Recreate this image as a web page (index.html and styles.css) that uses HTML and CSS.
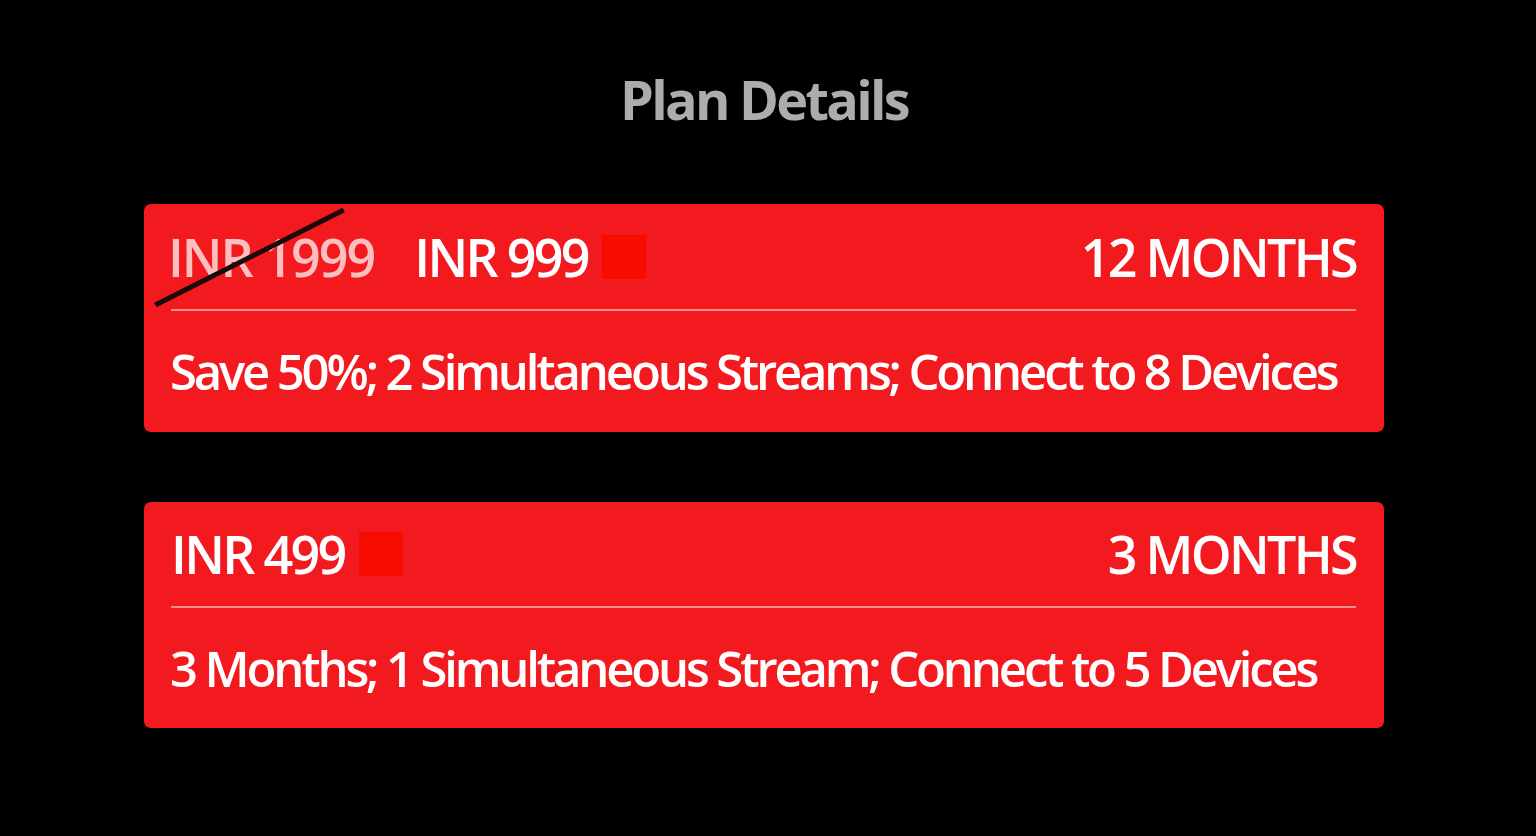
FILE: index.html
```html
<!DOCTYPE html>
<html>
<head>
<meta charset="utf-8">
<link rel="stylesheet" href="styles.css">
</head>
<body>
<main class="wrap">
  <h1 class="title">Plan Details</h1>
  <section class="card card-sale">
    <div class="head">
      <div class="prices">
        <span class="old">INR 1999</span>
        <span class="price">INR 999</span>
        <span class="chip"></span>
      </div>
      <span class="term">12 MONTHS</span>
    </div>
    <p class="desc">Save 50%; 2 Simultaneous Streams; Connect to 8 Devices</p>
  </section>
  <section class="card">
    <div class="head">
      <div class="prices">
        <span class="price">INR 499</span>
        <span class="chip"></span>
      </div>
      <span class="term">3 MONTHS</span>
    </div>
    <p class="desc">3 Months; 1 Simultaneous Stream; Connect to 5 Devices</p>
  </section>
</main>
</body>
</html>
```

FILE: styles.css
```css
html, body {
  margin: 0;
  background: #000;
  height: 100%;
}
body {
  font-family: "Open Sans", "Liberation Sans", sans-serif;
}
.wrap {
  width: 1240px;
  margin-left: 144px;
  padding-top: 65px;
}
.title {
  margin: 0 0 71px;
  text-align: center;
  color: #acacac;
  font-size: 54px;
  font-weight: 700;
  line-height: 68px;
  letter-spacing: -2.7px;
}
.card {
  background: #f31a1f;
  border-radius: 7px;
  padding: 18px 28px 26px 26px;
  margin-bottom: 70px;
  color: #fff;
}
.card-sale {
  padding-bottom: 27px;
}
.card-sale .head {
  height: 69px;
}
.head {
  display: flex;
  justify-content: space-between;
  align-items: center;
  height: 68px;
  padding-bottom: 18px;
  border-bottom: 2px solid #f88e8e;
  margin-left: 1px;
}
.prices {
  display: flex;
  align-items: center;
}
.old, .price, .term {
  font-size: 52px;
  font-weight: 600;
  letter-spacing: -2.7px;
  line-height: 68px;
}
.old {
  position: relative;
  color: rgba(255, 255, 255, 0.72);
  letter-spacing: -2px;
  margin-left: -3px;
  margin-right: 40px;
}
.old::after {
  content: "";
  position: absolute;
  left: -24px;
  top: 32px;
  width: 211px;
  height: 5px;
  background: #1a0a0a;
  transform: rotate(-26.8deg);
}
.chip {
  width: 44px;
  height: 44px;
  background: #f70c00;
  margin-left: 14px;
}
.desc {
  margin: 0;
  padding-top: 26px;
  font-size: 49px;
  font-weight: 600;
  letter-spacing: -3.15px;
  line-height: 68px;
  white-space: nowrap;
}
```
